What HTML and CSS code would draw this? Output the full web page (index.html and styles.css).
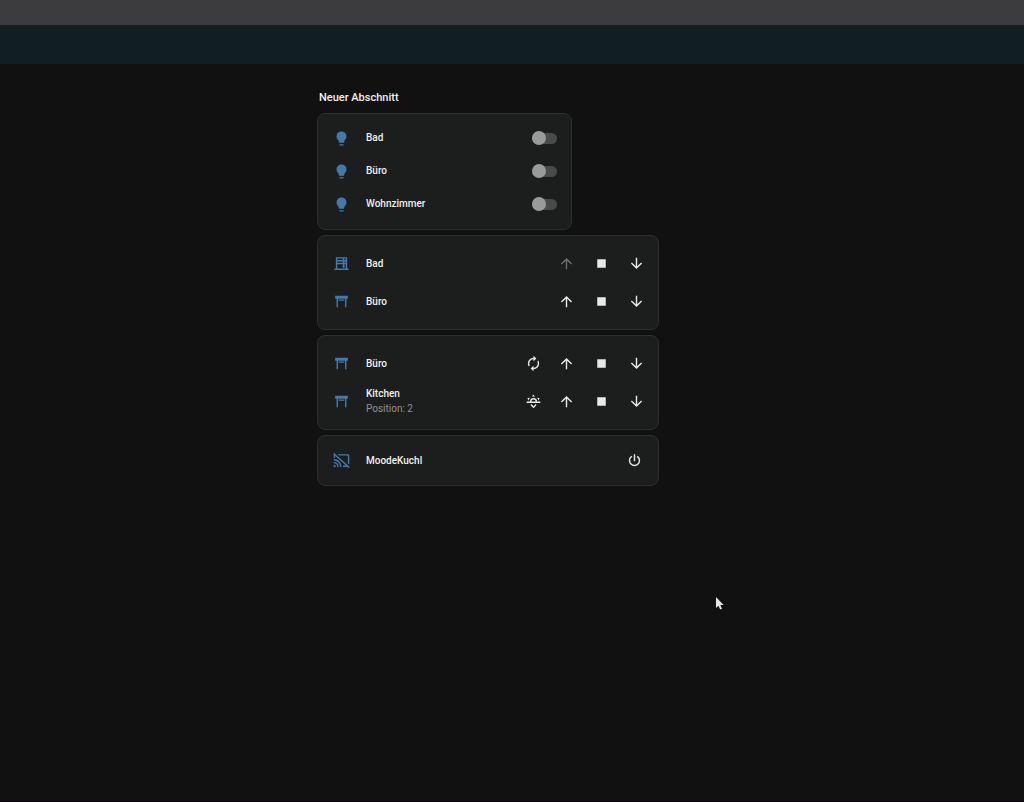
FILE: index.html
```html
<!DOCTYPE html>
<html lang="de">
<head>
  <meta charset="UTF-8" />
  <meta name="viewport" content="width=device-width, initial-scale=1.0"/>
  <title>Neuer Abschnitt</title>
  <link rel="stylesheet" href="styles.css">
</head>
<body>
  <!-- Icon set -->
  <svg class="sprite" aria-hidden="true">
    <symbol id="bulb" viewBox="0 0 24 24"><path d="M12,2A7,7 0 0,0 5,9C5,11.38 6.19,13.47 8,14.74V17A1,1 0 0,0 9,18H15A1,1 0 0,0 16,17V14.74C17.81,13.47 19,11.38 19,9A7,7 0 0,0 12,2M9,21A1,1 0 0,0 10,22H14A1,1 0 0,0 15,21V20H9V21Z"/></symbol>
    <symbol id="blinds" viewBox="0 0 24 24"><path d="M20 19V3H4V19H2V21H22V19H20M16 9H18V11H16V9M14 11H6V9H14V11M18 7H16V5H18V7M14 5V7H6V5H14M6 19V13H14V14.82C13.55 15.14 13.25 15.66 13.25 16.25C13.25 17.22 14.03 18 15 18S16.75 17.22 16.75 16.25C16.75 15.66 16.45 15.13 16 14.82V13H18V19H6Z"/></symbol>
    <symbol id="shutter" viewBox="0 0 24 24"><path d="M3 4H21V8H19V20H17V8H7V20H5V8H3V4M8 9H16V11H8V9Z"/></symbol>
    <symbol id="cast-off" viewBox="0 0 24 24"><path d="M1.6,1.27L0.25,2.75L1.41,3.8C1.16,4.13 1,4.55 1,5V8H3V5.23L18.2,19H14V21H20.41L22.31,22.72L23.65,21.24M6.5,3L8.7,5H21V16.14L23,17.95V5C23,3.89 22.1,3 21,3M1,10V12A9,9 0 0,1 10,21H12C12,14.92 7.08,10 1,10M1,14V16A5,5 0 0,1 6,21H8A7,7 0 0,0 1,14M1,18V21H4A3,3 0 0,0 1,18Z"/></symbol>
    <symbol id="up" viewBox="0 0 24 24"><path d="M13,20H11V8L5.5,13.5L4.08,12.08L12,4.16L19.92,12.08L18.5,13.5L13,8V20Z"/></symbol>
    <symbol id="down" viewBox="0 0 24 24"><path d="M11,4H13V16L18.5,10.5L19.92,11.92L12,19.84L4.08,11.92L5.5,10.5L11,16V4Z"/></symbol>
    <symbol id="stop" viewBox="0 0 24 24"><path d="M18,18H6V6H18V18Z"/></symbol>
    <symbol id="renew" viewBox="0 0 24 24"><path d="M12,6V9L16,5L12,1V4A8,8 0 0,0 4,12C4,13.57 4.46,15.03 5.24,16.26L6.7,14.8C6.25,13.97 6,13 6,12A6,6 0 0,1 12,6M18.76,7.74L17.3,9.2C17.74,10.04 18,11 18,12A6,6 0 0,1 12,18V15L8,19L12,23V20A8,8 0 0,0 20,12C20,10.43 19.54,8.97 18.76,7.74Z"/></symbol>
    <symbol id="sunset" viewBox="0 0 24 24"><path d="M3,12H7A5,5 0 0,1 12,7A5,5 0 0,1 17,12H21A1,1 0 0,1 22,13A1,1 0 0,1 21,14H3A1,1 0 0,1 2,13A1,1 0 0,1 3,12M15,12A3,3 0 0,0 12,9A3,3 0 0,0 9,12H15M12,2L14.39,5.42C13.65,5.15 12.84,5 12,5C11.16,5 10.35,5.15 9.61,5.42L12,2M3.34,7L7.5,6.65C6.9,7.16 6.36,7.78 5.94,8.5C5.5,9.24 5.25,10 5.11,10.79L3.34,7M20.65,7L18.88,10.79C18.74,10 18.47,9.23 18.05,8.5C17.63,7.78 17.1,7.15 16.5,6.64L20.65,7M12.71,20.71L15.82,17.6C16.21,17.21 16.21,16.57 15.82,16.18C15.43,15.79 14.8,15.79 14.41,16.18L12,18.59L9.59,16.18C9.2,15.79 8.57,15.79 8.18,16.18C7.79,16.57 7.79,17.21 8.18,17.6L11.29,20.71C11.5,20.9 11.74,21 12,21C12.26,21 12.5,20.9 12.71,20.71Z"/></symbol>
    <symbol id="power" viewBox="0 0 24 24"><path d="M16.56,5.44L15.11,6.89C16.84,7.94 18,9.83 18,12A6,6 0 0,1 12,18A6,6 0 0,1 6,12C6,9.83 7.16,7.94 8.88,6.88L7.44,5.44C5.36,6.88 4,9.28 4,12A8,8 0 0,0 12,20A8,8 0 0,0 20,12C20,9.28 18.64,6.88 16.56,5.44M13,3H11V13H13"/></symbol>
  </svg>

  <div class="topbar"></div>
  <header class="header"></header>

  <main class="view">
    <section class="section">
      <h1 class="section-title">Neuer Abschnitt</h1>

      <!-- Lights -->
      <div class="card lights">
        <div class="row">
          <svg class="icon state"><use href="#bulb"/></svg>
          <label class="name" for="light-bad">Bad</label>
          <input class="toggle" type="checkbox" id="light-bad">
        </div>
        <div class="row">
          <svg class="icon state"><use href="#bulb"/></svg>
          <label class="name" for="light-buero">Büro</label>
          <input class="toggle" type="checkbox" id="light-buero">
        </div>
        <div class="row">
          <svg class="icon state"><use href="#bulb"/></svg>
          <label class="name" for="light-wohnzimmer">Wohnzimmer</label>
          <input class="toggle" type="checkbox" id="light-wohnzimmer">
        </div>
      </div>

      <!-- Covers -->
      <div class="card covers">
        <div class="row">
          <svg class="icon state"><use href="#blinds"/></svg>
          <div class="name">Bad</div>
          <button class="btn" aria-label="Öffnen" disabled><svg class="icon"><use href="#up"/></svg></button>
          <button class="btn" aria-label="Stopp"><svg class="icon"><use href="#stop"/></svg></button>
          <button class="btn" aria-label="Schließen"><svg class="icon"><use href="#down"/></svg></button>
        </div>
        <div class="row">
          <svg class="icon state"><use href="#shutter"/></svg>
          <div class="name">Büro</div>
          <button class="btn" aria-label="Öffnen"><svg class="icon"><use href="#up"/></svg></button>
          <button class="btn" aria-label="Stopp"><svg class="icon"><use href="#stop"/></svg></button>
          <button class="btn" aria-label="Schließen"><svg class="icon"><use href="#down"/></svg></button>
        </div>
      </div>

      <!-- Covers with an extra action -->
      <div class="card covers">
        <div class="row">
          <svg class="icon state"><use href="#shutter"/></svg>
          <div class="name">Büro</div>
          <button class="btn extra" aria-label="Drehen"><svg class="icon"><use href="#renew"/></svg></button>
          <button class="btn" aria-label="Öffnen"><svg class="icon"><use href="#up"/></svg></button>
          <button class="btn" aria-label="Stopp"><svg class="icon"><use href="#stop"/></svg></button>
          <button class="btn" aria-label="Schließen"><svg class="icon"><use href="#down"/></svg></button>
        </div>
        <div class="row">
          <svg class="icon state"><use href="#shutter"/></svg>
          <div class="name">Kitchen<div class="secondary">Position: 2</div></div>
          <button class="btn extra" aria-label="Sonnenuntergang"><svg class="icon"><use href="#sunset"/></svg></button>
          <button class="btn" aria-label="Öffnen"><svg class="icon"><use href="#up"/></svg></button>
          <button class="btn" aria-label="Stopp"><svg class="icon"><use href="#stop"/></svg></button>
          <button class="btn" aria-label="Schließen"><svg class="icon"><use href="#down"/></svg></button>
        </div>
      </div>

      <!-- Media player -->
      <div class="card media">
        <div class="row">
          <svg class="icon state"><use href="#cast-off"/></svg>
          <div class="name">MoodeKuchl</div>
          <button class="btn" aria-label="Einschalten"><svg class="icon"><use href="#power"/></svg></button>
        </div>
      </div>
    </section>
  </main>

  <svg class="cursor" viewBox="0 0 9 13" aria-hidden="true"><path d="M1 0V11L3.4 8.8L5.2 12.6L7 11.8L5.3 8.1H8.6Z"/></svg>
</body>
</html>
```
FILE: styles.css
```css
* { margin: 0; padding: 0; box-sizing: border-box; }

body {
  position: relative;
  min-height: 100vh;
  background: #111111;
  border-bottom: 1px solid #080006;
  color: #f0f0f0;
  font-family: Roboto, sans-serif;
  font-size: 10px;
}

.sprite {
  display: none;
}

.topbar {
  height: 25px;
  background: #3c3c3e;
}
.header {
  height: 39px;
  background: #111e22;
}

.view {
  display: flex;
  justify-content: center;
  padding: 25px 48px 0 0;
}
.section {
  display: flex;
  flex-direction: column;
  gap: 5px;
  width: 342px;
}
.section-title {
  margin-bottom: 2px;
  padding-left: 2px;
  font-size: 11px;
  font-weight: 500;
  line-height: 17px;
}

/* Cards */
.card {
  padding: 8px 4px 8px 12px;
  background: #1c1e1d;
  border: 1px solid #2d2f2e;
  border-radius: 8px;
}
.lights {
  width: 255px;
  padding-right: 14px;
}
.covers {
  padding-bottom: 9px;
}
.media {
  padding-right: 6px;
}

.row {
  display: flex;
  align-items: center;
  height: 33px;
}
.covers .row {
  height: 38px;
}
.icon {
  display: block;
  flex: none;
  width: 17px;
  height: 17px;
  fill: currentColor;
}
.state {
  margin: 0 16px 0 3px;
  color: #4579ab;
}
.name {
  flex: 1;
  font-weight: 500;
  line-height: 15px;
}
.lights .name {
  padding-bottom: 2px;
}
.secondary {
  color: #919191;
  font-weight: 400;
}

/* Controls */
.btn {
  display: flex;
  align-items: center;
  justify-content: center;
  width: 35px;
  height: 33px;
  background: none;
  border: 0;
  color: #e8e8e8;
}
.btn.extra {
  width: 31px;
}
.btn:disabled {
  color: #6d6d6b;
}

.toggle {
  appearance: none;
  position: relative;
  width: 25px;
  height: 11px;
  border-radius: 6px;
  background: #4a4a4a;
}
.toggle::before {
  content: "";
  position: absolute;
  top: -2px;
  left: 0;
  width: 14px;
  height: 14px;
  border-radius: 50%;
  background: #999a99;
}
.toggle:checked::before {
  left: 11px;
}

.cursor {
  position: absolute;
  top: 597px;
  left: 715px;
  width: 9px;
  height: 13px;
  fill: #e8e8e8;
}
```
